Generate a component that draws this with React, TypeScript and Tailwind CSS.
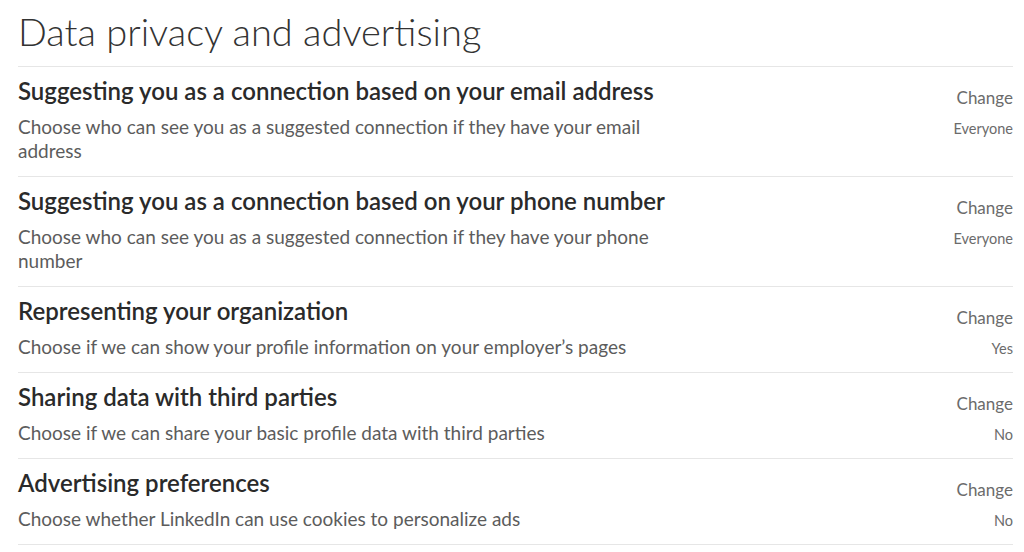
import React from "react";

type Setting = {
  title: string;
  description: string;
  value: string;
};

const settings: Setting[] = [
  {
    title: "Suggesting you as a connection based on your email address",
    description:
      "Choose who can see you as a suggested connection if they have your email address",
    value: "Everyone",
  },
  {
    title: "Suggesting you as a connection based on your phone number",
    description:
      "Choose who can see you as a suggested connection if they have your phone number",
    value: "Everyone",
  },
  {
    title: "Representing your organization",
    description: "Choose if we can show your profile information on your employer’s pages",
    value: "Yes",
  },
  {
    title: "Sharing data with third parties",
    description: "Choose if we can share your basic profile data with third parties",
    value: "No",
  },
  {
    title: "Advertising preferences",
    description: "Choose whether LinkedIn can use cookies to personalize ads",
    value: "No",
  },
];

const SettingRow = ({ item }: { item: Setting }) => (
  <div className="flex justify-between border-t border-[#e6e6e6] pt-[8px] pb-[13px]">
    <div className="max-w-[660px]">
      <h3 className="text-[24px] leading-[32px] font-semibold text-[#2a2a2a]">{item.title}</h3>
      <p className="mt-[8px] text-[19px] leading-[24px] text-[#5c5c5c]">{item.description}</p>
    </div>
    <div className="flex flex-col items-end pt-[11px]">
      <button className="text-[17px] leading-[24px] text-[#6b6b6b]">Change</button>
      <span className="mt-[10px] text-[14.5px] leading-[18px] text-[#6b6b6b]">{item.value}</span>
    </div>
  </div>
);

export default function App() {
  return (
    <div
      className="w-[1024px] h-[552px] bg-white pl-[18px] pr-[11px] overflow-hidden"
      style={{ fontFamily: "Lato, 'Noto Sans', sans-serif" }}
    >
      <h1 className="pt-[8px] pb-[12px] text-[38px] leading-[46px] font-light text-[#333333]">
        Data privacy and advertising
      </h1>
      <div className="border-b border-[#e6e6e6]">
        {settings.map((s) => (
          <SettingRow key={s.title} item={s} />
        ))}
      </div>
    </div>
  );
}
